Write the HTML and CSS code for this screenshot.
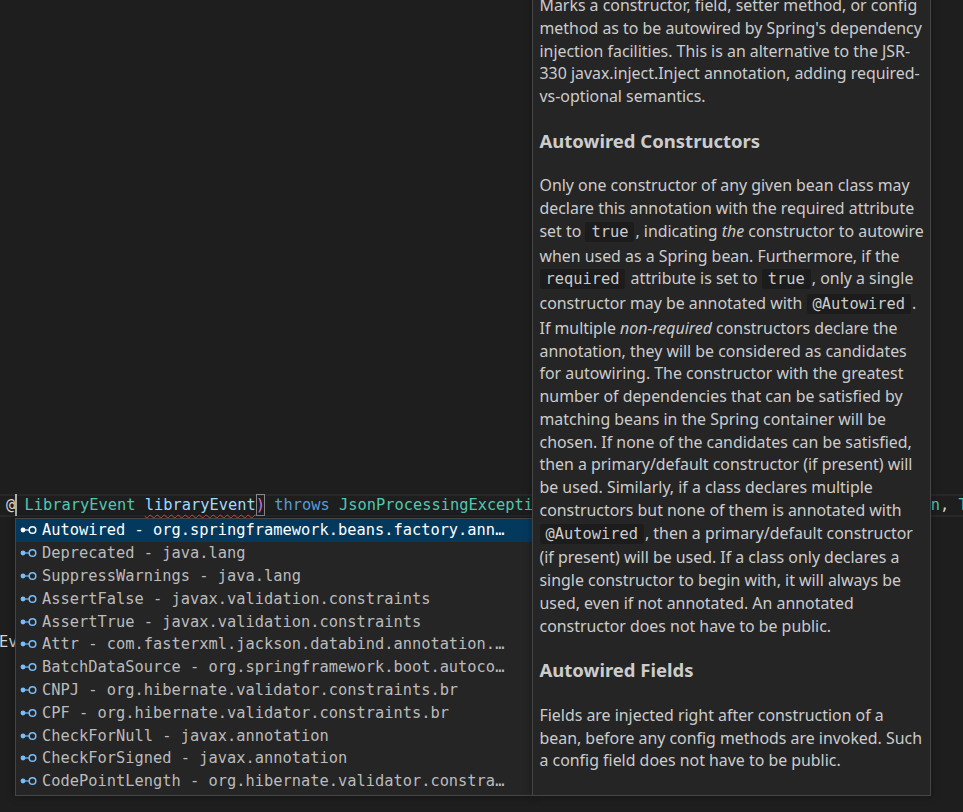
FILE: index.html
```html
<!DOCTYPE html>
<html>
  <head>
    <title>Autowired suggestions</title>

    <link rel="stylesheet" href="styles.css">
  </head>

  <body>
    <div id="editor">
      <div class="codeLine current"><span class="plain">@</span><span class="cursor"></span> <span class="type">LibraryEvent</span> <span class="param squiggle">libraryEvent</span><span class="bracket">)</span> <span class="keyword">throws</span> <span class="type">JsonProcessingException</span><span class="plain">,</span> <span class="type">ExecutionException</span><span class="plain">,</span> <span class="type">InterruptedException</span><span class="plain">,</span> <span class="type">TimeoutException</span></div>
      <div class="codeLine evLine"><span class="plain">Ev</span></div>
    </div>

    <div id="suggest">
      <div class="row selected"><svg class="icon" viewBox="0 0 18 10"><circle cx="3" cy="5" r="2.4"/><path d="M3 5h7"/><circle class="ring" cx="12.5" cy="5" r="3.3"/></svg><span class="label">Autowired - org.springframework.beans.factory.annotation</span></div>
      <div class="row"><svg class="icon" viewBox="0 0 18 10"><circle cx="3" cy="5" r="2.4"/><path d="M3 5h7"/><circle class="ring" cx="12.5" cy="5" r="3.3"/></svg><span class="label">Deprecated - java.lang</span></div>
      <div class="row"><svg class="icon" viewBox="0 0 18 10"><circle cx="3" cy="5" r="2.4"/><path d="M3 5h7"/><circle class="ring" cx="12.5" cy="5" r="3.3"/></svg><span class="label">SuppressWarnings - java.lang</span></div>
      <div class="row"><svg class="icon" viewBox="0 0 18 10"><circle cx="3" cy="5" r="2.4"/><path d="M3 5h7"/><circle class="ring" cx="12.5" cy="5" r="3.3"/></svg><span class="label">AssertFalse - javax.validation.constraints</span></div>
      <div class="row"><svg class="icon" viewBox="0 0 18 10"><circle cx="3" cy="5" r="2.4"/><path d="M3 5h7"/><circle class="ring" cx="12.5" cy="5" r="3.3"/></svg><span class="label">AssertTrue - javax.validation.constraints</span></div>
      <div class="row"><svg class="icon" viewBox="0 0 18 10"><circle cx="3" cy="5" r="2.4"/><path d="M3 5h7"/><circle class="ring" cx="12.5" cy="5" r="3.3"/></svg><span class="label">Attr - com.fasterxml.jackson.databind.annotation.JsonAppend</span></div>
      <div class="row"><svg class="icon" viewBox="0 0 18 10"><circle cx="3" cy="5" r="2.4"/><path d="M3 5h7"/><circle class="ring" cx="12.5" cy="5" r="3.3"/></svg><span class="label">BatchDataSource - org.springframework.boot.autoconfigure.batch</span></div>
      <div class="row"><svg class="icon" viewBox="0 0 18 10"><circle cx="3" cy="5" r="2.4"/><path d="M3 5h7"/><circle class="ring" cx="12.5" cy="5" r="3.3"/></svg><span class="label">CNPJ - org.hibernate.validator.constraints.br</span></div>
      <div class="row"><svg class="icon" viewBox="0 0 18 10"><circle cx="3" cy="5" r="2.4"/><path d="M3 5h7"/><circle class="ring" cx="12.5" cy="5" r="3.3"/></svg><span class="label">CPF - org.hibernate.validator.constraints.br</span></div>
      <div class="row"><svg class="icon" viewBox="0 0 18 10"><circle cx="3" cy="5" r="2.4"/><path d="M3 5h7"/><circle class="ring" cx="12.5" cy="5" r="3.3"/></svg><span class="label">CheckForNull - javax.annotation</span></div>
      <div class="row"><svg class="icon" viewBox="0 0 18 10"><circle cx="3" cy="5" r="2.4"/><path d="M3 5h7"/><circle class="ring" cx="12.5" cy="5" r="3.3"/></svg><span class="label">CheckForSigned - javax.annotation</span></div>
      <div class="row"><svg class="icon" viewBox="0 0 18 10"><circle cx="3" cy="5" r="2.4"/><path d="M3 5h7"/><circle class="ring" cx="12.5" cy="5" r="3.3"/></svg><span class="label">CodePointLength - org.hibernate.validator.constraints</span></div>
    </div>

    <div id="docs">
      <p>Marks a constructor, field, setter method, or config<br>method as to be autowired by Spring's dependency<br>injection facilities. This is an alternative to the JSR-<br>330 javax.inject.Inject annotation, adding required-<br>vs-optional semantics.</p>

      <h4>Autowired Constructors</h4>

      <p>Only one constructor of any given bean class may<br>declare this annotation with the required attribute<br>set to <code>true</code>, indicating <em>the</em> constructor to autowire<br>when used as a Spring bean. Furthermore, if the<br><code>required</code> attribute is set to <code>true</code>, only a single<br>constructor may be annotated with <code>@Autowired</code>.<br>If multiple <em>non-required</em> constructors declare the<br>annotation, they will be considered as candidates<br>for autowiring. The constructor with the greatest<br>number of dependencies that can be satisfied by<br>matching beans in the Spring container will be<br>chosen. If none of the candidates can be satisfied,<br>then a primary/default constructor (if present) will<br>be used. Similarly, if a class declares multiple<br>constructors but none of them is annotated with<br><code>@Autowired</code>, then a primary/default constructor<br>(if present) will be used. If a class only declares a<br>single constructor to begin with, it will always be<br>used, even if not annotated. An annotated<br>constructor does not have to be public.</p>

      <h4>Autowired Fields</h4>

      <p>Fields are injected right after construction of a<br>bean, before any config methods are invoked. Such<br>a config field does not have to be public.</p>
    </div>
  </body>
</html>
```

FILE: styles.css
```css
html,
body {
  margin: 0;
  height: 100%;
  overflow: hidden;
  background-color: #1e1e1e;
}

#editor {
  padding-top: 494px;
  font-family: "DejaVu Sans Mono", monospace;
  font-size: 15.37px;
  color: #d4d4d4;
  overflow: hidden;
}

.codeLine {
  box-sizing: border-box;
  height: 23px;
  line-height: 19px;
  white-space: pre;
}
.current {
  padding-left: 6px;
  border-top: #282828 solid 2px;
  border-bottom: #282828 solid 2px;
}
.evLine {
  margin-top: 115px;
  margin-left: -1px;
  line-height: 21px;
}

.plain {
  color: #d4d4d4;
}
.type {
  color: #4ec9b0;
}
.param {
  color: #9cdcfe;
}
.keyword {
  color: #569cd6;
}
.squiggle {
  text-decoration: underline wavy #f14c4c 1px;
  text-underline-offset: 4px;
}
.bracket {
  position: relative;
  color: #da70d6;
}
.bracket::after {
  content: "";
  position: absolute;
  left: 0;
  right: 0;
  top: -2px;
  bottom: -2px;
  border: #888 solid 1px;
}
.cursor {
  display: inline-block;
  width: 2px;
  height: 22px;
  margin: -2px -2px 0 0;
  vertical-align: top;
  background-color: #aeafad;
}

/* overlays */
#suggest {
  position: absolute;
  left: 15px;
  top: 518px;
  width: 516px;
  height: 276px;
  border: #454545 solid 1px;
  background-color: #252526;
  box-shadow: 0 0 8px rgba(0, 0, 0, 0.36);
  font-family: "DejaVu Sans Mono", monospace;
  font-size: 15.37px;
  color: #bbbbbb;
  overflow: hidden;
}
.row {
  display: flex;
  align-items: center;
  height: 22.8px;
  padding-left: 4px;
}
.row.selected {
  background-color: #04395e;
  color: #ffffff;
}
.label {
  width: 463px;
  margin-left: 4px;
  white-space: nowrap;
  overflow: hidden;
  text-overflow: ellipsis;
}
.icon {
  width: 18px;
  height: 10px;
  flex-shrink: 0;
  fill: #75beff;
  stroke: #75beff;
  stroke-width: 1.2;
}
.icon circle {
  stroke: none;
}
.icon .ring {
  fill: none;
  stroke: #75beff;
  stroke-width: 1.5;
}
.selected .icon {
  fill: #ffffff;
  stroke: #ffffff;
}
.selected .icon circle {
  stroke: none;
}
.selected .icon .ring {
  stroke: #ffffff;
}

#docs {
  position: absolute;
  left: 532px;
  top: -7px;
  width: 383.5px;
  height: 801px;
  padding: 0 7px 0 6.5px;
  border: #454545 solid 1px;
  background-color: #252526;
  box-shadow: 0 0 8px rgba(0, 0, 0, 0.36);
  font-family: "Noto Sans", sans-serif;
  font-size: 15.9px;
  line-height: 22.75px;
  color: #cccccc;
  white-space: nowrap;
  overflow: hidden;
}
#docs p {
  margin: 0;
}
#docs h4 {
  margin: 21px 0 21.5px 0;
  font-size: 18.5px;
  font-weight: bold;
  line-height: 24px;
}
code {
  padding: 1px 6px;
  margin: 0 1px 0 0;
  border-radius: 3px;
  background-color: #1c1c1c;
  font-family: "DejaVu Sans Mono", monospace;
  font-size: 15.37px;
  line-height: 24.8px;
}
```
